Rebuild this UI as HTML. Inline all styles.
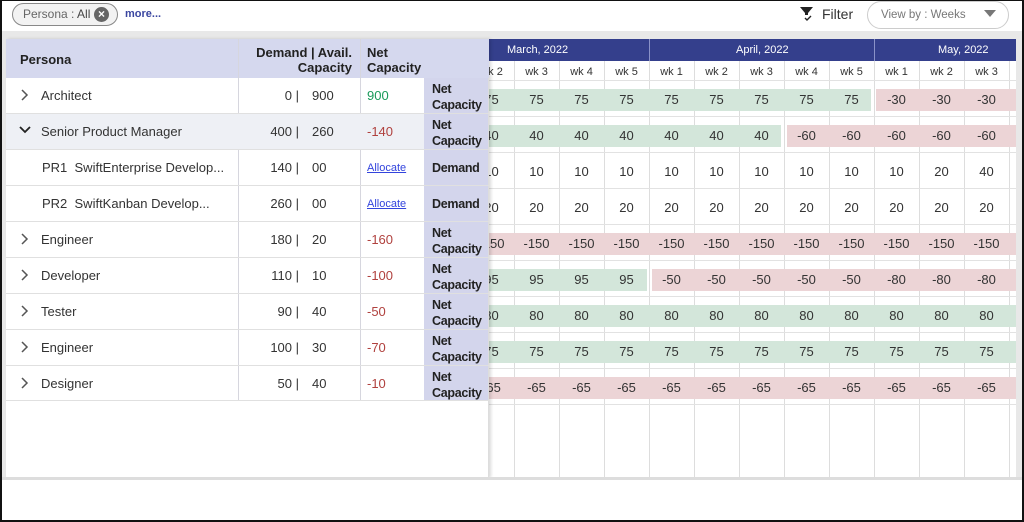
<!DOCTYPE html>
<html><head><meta charset="utf-8"><style>
*{box-sizing:border-box;margin:0;padding:0}
body{width:1024px;height:522px;overflow:hidden;font-family:"Liberation Sans",sans-serif;color:#333;background:#fff;position:relative}
.a{position:absolute}
.frame{left:0;top:0;width:1024px;height:522px;border:2px solid #111;border-top-width:1px;border-bottom-width:2px;z-index:50;pointer-events:none}
.c{position:absolute;width:45px;text-align:center;font-size:13px;line-height:22px;color:#333}
.vl{position:absolute;width:1px;background:#ddd;top:61px;height:417px}
.hl{position:absolute;height:1px;background:#e2e2e2;left:489px;width:527px}
.band{position:absolute;height:22px}
.g{background:#d3e6da}.r{background:#ecd4d6}
.lrow{position:absolute;left:6px;width:483px;height:36px;border-bottom:1px solid #e0e0e0;font-size:13px}
.nm{position:absolute;left:35px;top:10px;color:#333}
.chev{position:absolute;left:13px;top:11px}
.dm{position:absolute;right:190px;top:10px;text-align:right}
.av{position:absolute;left:306px;top:10px}
.nt{position:absolute;left:361px;top:10px}
.lab{position:absolute;left:426px;top:3px;font-weight:bold;font-size:12.5px;letter-spacing:-0.3px;line-height:16px;color:#222}
.lab1{top:10px}
</style></head><body>
<div class="a frame"></div>
<div class="a" style="left:12px;top:3px;width:106px;height:23px;border:1px solid #888;border-radius:12px;background:#f2f2f2;font-size:12px;color:#666;line-height:21px;padding-left:10px">Persona : <span style="color:#444">All</span></div>
<div class="a" style="left:94px;top:7px;width:15px;height:15px;border-radius:50%;background:#666;color:#fff;font-size:12px;line-height:15px;text-align:center;font-weight:bold">×</div>
<div class="a" style="left:125px;top:8px;font-size:11px;font-weight:bold;color:#3a46a0">more...</div>
<svg class="a" style="left:799px;top:6px" width="16" height="16" viewBox="0 0 16 16"><path d="M1 1h13l-5 6v2H6V7z" fill="#222"/><path d="M6 12l2 2 4-4" stroke="#222" stroke-width="1.4" fill="none"/></svg>
<div class="a" style="left:822px;top:6px;font-size:14px;color:#333">Filter</div>
<div class="a" style="left:867px;top:1px;width:142px;height:28px;border:1px solid #ccc;border-radius:14px;font-size:11.5px;color:#777;line-height:26px;padding-left:13px">View by : Weeks</div>
<svg class="a" style="left:984px;top:10px" width="12" height="8"><path d="M0 0h12L6 7z" fill="#777"/></svg>
<div class="a" style="left:0;top:31px;width:1024px;height:449px;background:#e8e8e8"></div>
<div class="a" style="left:6px;top:39px;width:1010px;height:439px;background:#fff"></div>
<div class="a" style="left:469px;top:39px;width:547px;height:22px;background:#343f8c"></div>
<div class="a" style="left:649px;top:39px;width:1px;height:22px;background:#8a92c8"></div>
<div class="a" style="left:874px;top:39px;width:1px;height:22px;background:#8a92c8"></div>
<div class="a" style="left:507px;top:44px;font-size:11px;color:#fff">March, 2022</div>
<div class="a" style="left:736px;top:44px;font-size:11px;color:#fff">April, 2022</div>
<div class="a" style="left:938px;top:44px;font-size:11px;color:#fff">May, 2022</div>
<div class="vl" style="left:514px"></div><div class="vl" style="left:559px"></div><div class="vl" style="left:604px"></div><div class="vl" style="left:649px"></div><div class="vl" style="left:694px"></div><div class="vl" style="left:739px"></div><div class="vl" style="left:784px"></div><div class="vl" style="left:829px"></div><div class="vl" style="left:874px"></div><div class="vl" style="left:919px"></div><div class="vl" style="left:964px"></div><div class="vl" style="left:1009px"></div>
<div class="hl" style="top:80px"></div><div class="hl" style="top:116px"></div><div class="hl" style="top:152px"></div><div class="hl" style="top:188px"></div><div class="hl" style="top:224px"></div><div class="hl" style="top:260px"></div><div class="hl" style="top:296px"></div><div class="hl" style="top:332px"></div><div class="hl" style="top:368px"></div><div class="hl" style="top:404px"></div>
<div style="position:absolute;top:61px;left:469px;font-size:11px">
<div class="c" style="left:0;font-size:11px">wk 2</div><div class="c" style="left:45px;font-size:11px">wk 3</div><div class="c" style="left:90px;font-size:11px">wk 4</div><div class="c" style="left:135px;font-size:11px">wk 5</div><div class="c" style="left:180px;font-size:11px">wk 1</div><div class="c" style="left:225px;font-size:11px">wk 2</div><div class="c" style="left:270px;font-size:11px">wk 3</div><div class="c" style="left:315px;font-size:11px">wk 4</div><div class="c" style="left:360px;font-size:11px">wk 5</div><div class="c" style="left:405px;font-size:11px">wk 1</div><div class="c" style="left:450px;font-size:11px">wk 2</div><div class="c" style="left:495px;font-size:11px">wk 3</div>
</div>
<div class="band g" style="left:469px;width:402px;top:89px"></div><div class="band r" style="left:876px;width:140px;top:89px"></div>
<div class="band g" style="left:469px;width:312px;top:125px"></div><div class="band r" style="left:787px;width:229px;top:125px"></div>
<div class="band r" style="left:469px;width:547px;top:233px"></div>
<div class="band g" style="left:469px;width:178px;top:269px"></div><div class="band r" style="left:652px;width:364px;top:269px"></div>
<div class="band g" style="left:469px;width:547px;top:305px"></div>
<div class="band g" style="left:469px;width:547px;top:341px"></div>
<div class="band r" style="left:469px;width:547px;top:377px"></div>
<div style="position:absolute;top:89px;left:469px"><div class="c" style="left:0">75</div><div class="c" style="left:45px">75</div><div class="c" style="left:90px">75</div><div class="c" style="left:135px">75</div><div class="c" style="left:180px">75</div><div class="c" style="left:225px">75</div><div class="c" style="left:270px">75</div><div class="c" style="left:315px">75</div><div class="c" style="left:360px">75</div><div class="c" style="left:405px">-30</div><div class="c" style="left:450px">-30</div><div class="c" style="left:495px">-30</div></div>
<div style="position:absolute;top:125px;left:469px"><div class="c" style="left:0">40</div><div class="c" style="left:45px">40</div><div class="c" style="left:90px">40</div><div class="c" style="left:135px">40</div><div class="c" style="left:180px">40</div><div class="c" style="left:225px">40</div><div class="c" style="left:270px">40</div><div class="c" style="left:315px">-60</div><div class="c" style="left:360px">-60</div><div class="c" style="left:405px">-60</div><div class="c" style="left:450px">-60</div><div class="c" style="left:495px">-60</div></div>
<div style="position:absolute;top:161px;left:469px"><div class="c" style="left:0">10</div><div class="c" style="left:45px">10</div><div class="c" style="left:90px">10</div><div class="c" style="left:135px">10</div><div class="c" style="left:180px">10</div><div class="c" style="left:225px">10</div><div class="c" style="left:270px">10</div><div class="c" style="left:315px">10</div><div class="c" style="left:360px">10</div><div class="c" style="left:405px">10</div><div class="c" style="left:450px">20</div><div class="c" style="left:495px">40</div></div>
<div style="position:absolute;top:197px;left:469px"><div class="c" style="left:0">20</div><div class="c" style="left:45px">20</div><div class="c" style="left:90px">20</div><div class="c" style="left:135px">20</div><div class="c" style="left:180px">20</div><div class="c" style="left:225px">20</div><div class="c" style="left:270px">20</div><div class="c" style="left:315px">20</div><div class="c" style="left:360px">20</div><div class="c" style="left:405px">20</div><div class="c" style="left:450px">20</div><div class="c" style="left:495px">20</div></div>
<div style="position:absolute;top:233px;left:469px"><div class="c" style="left:0">-150</div><div class="c" style="left:45px">-150</div><div class="c" style="left:90px">-150</div><div class="c" style="left:135px">-150</div><div class="c" style="left:180px">-150</div><div class="c" style="left:225px">-150</div><div class="c" style="left:270px">-150</div><div class="c" style="left:315px">-150</div><div class="c" style="left:360px">-150</div><div class="c" style="left:405px">-150</div><div class="c" style="left:450px">-150</div><div class="c" style="left:495px">-150</div></div>
<div style="position:absolute;top:269px;left:469px"><div class="c" style="left:0">95</div><div class="c" style="left:45px">95</div><div class="c" style="left:90px">95</div><div class="c" style="left:135px">95</div><div class="c" style="left:180px">-50</div><div class="c" style="left:225px">-50</div><div class="c" style="left:270px">-50</div><div class="c" style="left:315px">-50</div><div class="c" style="left:360px">-50</div><div class="c" style="left:405px">-80</div><div class="c" style="left:450px">-80</div><div class="c" style="left:495px">-80</div></div>
<div style="position:absolute;top:305px;left:469px"><div class="c" style="left:0">80</div><div class="c" style="left:45px">80</div><div class="c" style="left:90px">80</div><div class="c" style="left:135px">80</div><div class="c" style="left:180px">80</div><div class="c" style="left:225px">80</div><div class="c" style="left:270px">80</div><div class="c" style="left:315px">80</div><div class="c" style="left:360px">80</div><div class="c" style="left:405px">80</div><div class="c" style="left:450px">80</div><div class="c" style="left:495px">80</div></div>
<div style="position:absolute;top:341px;left:469px"><div class="c" style="left:0">75</div><div class="c" style="left:45px">75</div><div class="c" style="left:90px">75</div><div class="c" style="left:135px">75</div><div class="c" style="left:180px">75</div><div class="c" style="left:225px">75</div><div class="c" style="left:270px">75</div><div class="c" style="left:315px">75</div><div class="c" style="left:360px">75</div><div class="c" style="left:405px">75</div><div class="c" style="left:450px">75</div><div class="c" style="left:495px">75</div></div>
<div style="position:absolute;top:377px;left:469px"><div class="c" style="left:0">-65</div><div class="c" style="left:45px">-65</div><div class="c" style="left:90px">-65</div><div class="c" style="left:135px">-65</div><div class="c" style="left:180px">-65</div><div class="c" style="left:225px">-65</div><div class="c" style="left:270px">-65</div><div class="c" style="left:315px">-65</div><div class="c" style="left:360px">-65</div><div class="c" style="left:405px">-65</div><div class="c" style="left:450px">-65</div><div class="c" style="left:495px">-65</div></div>
<div class="a" style="left:6px;top:39px;width:483px;height:439px;background:#fff;box-shadow:2px 0 3px rgba(0,0,0,0.15);border-right:1px solid #ddd"></div>
<div class="a" style="left:6px;top:39px;width:483px;height:39px;background:#d5d8ee"></div>
<div class="a" style="left:424px;top:78px;width:64px;height:323px;background:#d3d5ec"></div>
<div class="a" style="left:238px;top:39px;width:1px;height:362px;background:#d6d6de"></div>
<div class="a" style="left:360px;top:39px;width:1px;height:362px;background:#d6d6de"></div>
<div class="a" style="left:20px;top:52px;font-size:13px;font-weight:bold;color:#222">Persona</div>
<div class="a" style="left:240px;top:45px;width:112px;text-align:right;font-size:13px;font-weight:bold;line-height:15px;color:#222">Demand | Avail.<br>Capacity</div>
<div class="a" style="left:367px;top:45px;font-size:13px;font-weight:bold;line-height:15px;color:#222">Net<br>Capacity</div>
<div class="a" style="left:6px;top:114px;width:418px;height:36px;background:#eef0f5"></div>
<div class="lrow" style="top:78px"><svg class="chev" width="10" height="12"><path d="M3 1l5 5-5 5" stroke="#555" stroke-width="1.5" fill="none"/></svg><span class="nm">Architect</span><span class="dm">0 |</span><span class="av">900</span><span class="nt" style="color:#1a9a5a">900</span><span class="lab">Net<br>Capacity</span></div>
<div class="lrow" style="top:114px"><svg class="chev" width="12" height="10"><path d="M1 2l5 5 5-5" stroke="#222" stroke-width="1.8" fill="none"/></svg><span class="nm">Senior Product Manager</span><span class="dm">400 |</span><span class="av">260</span><span class="nt" style="color:#b0413e">-140</span><span class="lab">Net<br>Capacity</span></div>
<div class="lrow" style="top:150px"><span class="nm" style="left:36px">PR1&nbsp;&nbsp;SwiftEnterprise Develop...</span><span class="dm">140 |</span><span class="av">00</span><span class="nt" style="color:#3344dd;text-decoration:underline;font-size:11px;top:12px">Allocate</span><span class="lab lab1">Demand</span></div>
<div class="lrow" style="top:186px"><span class="nm" style="left:36px">PR2&nbsp;&nbsp;SwiftKanban Develop...</span><span class="dm">260 |</span><span class="av">00</span><span class="nt" style="color:#3344dd;text-decoration:underline;font-size:11px;top:12px">Allocate</span><span class="lab lab1">Demand</span></div>
<div class="lrow" style="top:222px"><svg class="chev" width="10" height="12"><path d="M3 1l5 5-5 5" stroke="#555" stroke-width="1.5" fill="none"/></svg><span class="nm">Engineer</span><span class="dm">180 |</span><span class="av">20</span><span class="nt" style="color:#b0413e">-160</span><span class="lab">Net<br>Capacity</span></div>
<div class="lrow" style="top:258px"><svg class="chev" width="10" height="12"><path d="M3 1l5 5-5 5" stroke="#555" stroke-width="1.5" fill="none"/></svg><span class="nm">Developer</span><span class="dm">110 |</span><span class="av">10</span><span class="nt" style="color:#b0413e">-100</span><span class="lab">Net<br>Capacity</span></div>
<div class="lrow" style="top:294px"><svg class="chev" width="10" height="12"><path d="M3 1l5 5-5 5" stroke="#555" stroke-width="1.5" fill="none"/></svg><span class="nm">Tester</span><span class="dm">90 |</span><span class="av">40</span><span class="nt" style="color:#b0413e">-50</span><span class="lab">Net<br>Capacity</span></div>
<div class="lrow" style="top:330px"><svg class="chev" width="10" height="12"><path d="M3 1l5 5-5 5" stroke="#555" stroke-width="1.5" fill="none"/></svg><span class="nm">Engineer</span><span class="dm">100 |</span><span class="av">30</span><span class="nt" style="color:#b0413e">-70</span><span class="lab">Net<br>Capacity</span></div>
<div class="lrow" style="top:366px;height:35px"><svg class="chev" width="10" height="12"><path d="M3 1l5 5-5 5" stroke="#555" stroke-width="1.5" fill="none"/></svg><span class="nm">Designer</span><span class="dm">50 |</span><span class="av">40</span><span class="nt" style="color:#b0413e">-10</span><span class="lab">Net<br>Capacity</span></div>
<div class="a" style="left:2px;top:477px;width:1020px;height:3px;background:#ddd"></div>
<div class="a" style="left:2px;top:480px;width:1020px;height:40px;background:#fff"></div>
</body></html>
